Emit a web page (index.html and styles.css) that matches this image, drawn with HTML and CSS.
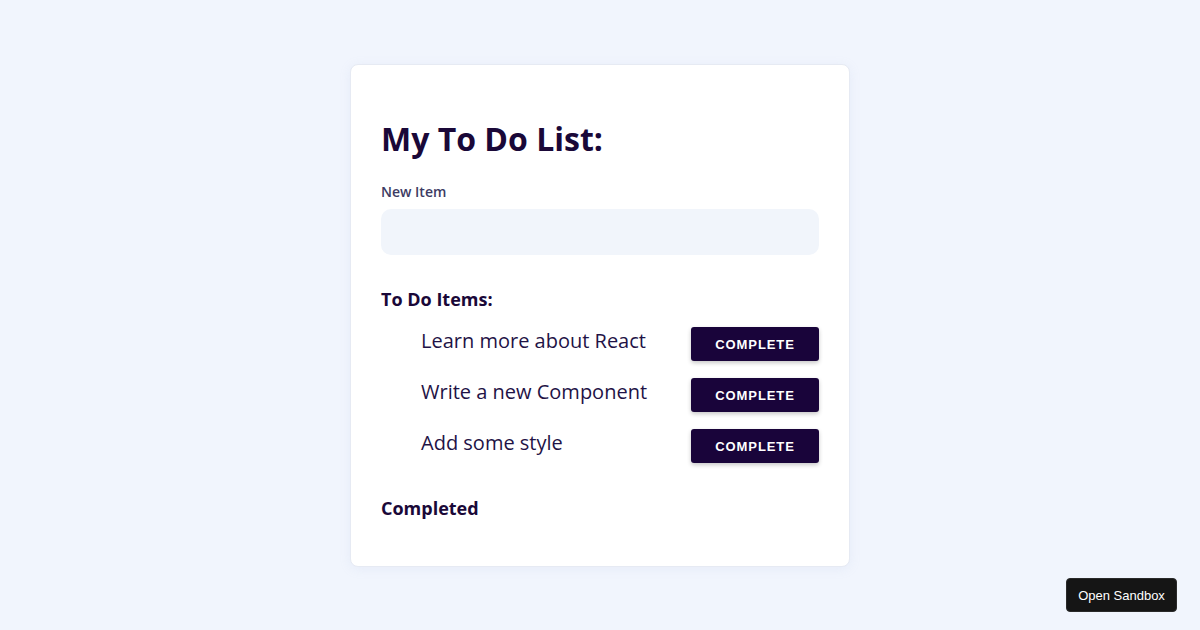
FILE: index.html
```html
<!DOCTYPE html>
<html>
<head>
<meta charset="utf-8">
<link rel="stylesheet" href="styles.css">
</head>
<body>
<div class="card">
  <h1 class="title">My To Do List:</h1>
  <label class="label" for="new-item">New Item</label>
  <input class="input" id="new-item" type="text">
  <h3 class="section">To Do Items:</h3>
  <ul class="list">
    <li class="item"><span class="item-text">Learn more about React</span><button class="btn">COMPLETE</button></li>
    <li class="item"><span class="item-text">Write a new Component</span><button class="btn">COMPLETE</button></li>
    <li class="item"><span class="item-text">Add some style</span><button class="btn">COMPLETE</button></li>
  </ul>
  <h3 class="section">Completed</h3>
</div>
<a class="sandbox">Open Sandbox</a>
</body>
</html>
```
FILE: styles.css
```css
html, body {
  margin: 0;
  padding: 0;
}
body {
  background: #f1f5fd;
  font-family: "Open Sans", sans-serif;
  color: #1b0b3b;
  height: 630px;
  overflow: hidden;
}
.card {
  box-sizing: border-box;
  width: 500px;
  margin: 64px auto 0;
  background: #fff;
  border: 1px solid #e6eaf3;
  border-radius: 8px;
  box-shadow: 0 2px 12px rgba(160, 175, 210, 0.12);
  padding: 52px 30px 46px;
  display: flex;
  flex-direction: column;
}
.title {
  margin: 0;
  font-size: 32px;
  font-weight: 700;
  color: #1a0838;
}
.label {
  margin-top: 22px;
  font-size: 14px;
  font-weight: 600;
  color: #3d3b63;
}
.input {
  margin-top: 8px;
  height: 46px;
  box-sizing: border-box;
  border: none;
  border-radius: 10px;
  background: #f1f5fb;
  outline: none;
  font-family: inherit;
}
.section {
  margin: 32px 0 0;
  font-size: 18px;
  font-weight: 700;
  color: #1a0838;
}
.list {
  list-style: none;
  margin: 16px 0 0;
  padding: 0 0 0 40px;
}
.item {
  display: flex;
  justify-content: space-between;
  align-items: flex-start;
  margin-bottom: 17px;
}
.item-text {
  font-size: 20px;
  color: #1f1346;
}
.btn {
  width: 128px;
  height: 34px;
  border: none;
  border-radius: 3px;
  background: #19043a;
  color: #fff;
  font-family: "Liberation Sans", Arial, sans-serif;
  font-weight: 700;
  font-size: 13px;
  letter-spacing: 0.9px;
  box-shadow: 0 2px 4px rgba(0, 0, 0, 0.22);
}
.list + .section {
  margin-top: 16px;
}
.sandbox {
  position: fixed;
  right: 23px;
  bottom: 18px;
  width: 111px;
  height: 34px;
  box-sizing: border-box;
  display: flex;
  align-items: center;
  justify-content: center;
  background: #151515;
  border: 1px solid #2a2a2a;
  border-radius: 4px;
  color: #fff;
  font-family: "Liberation Sans", Arial, sans-serif;
  font-size: 13px;
}
```
